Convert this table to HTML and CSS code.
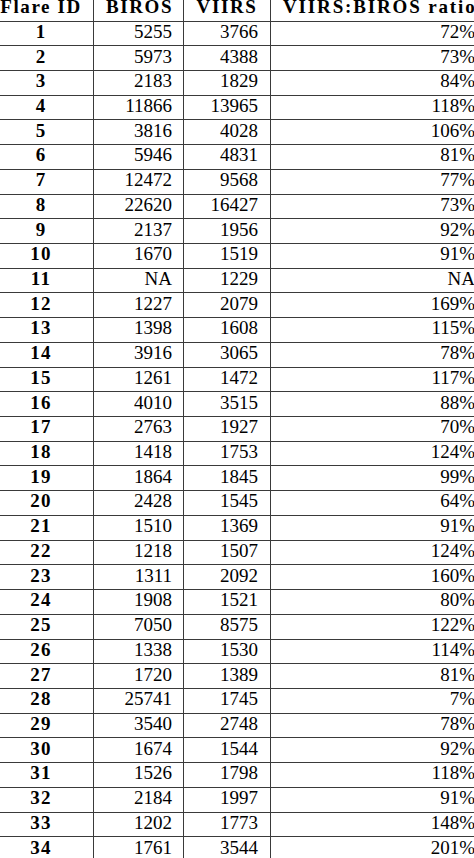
FILE: index.html
```html
<!DOCTYPE html>
<html>
<head>
<meta charset="utf-8">
<link rel="stylesheet" href="styles.css">
</head>
<body>
<div class="table" id="t">
  <div class="cell head c1">Flare ID</div>
  <div class="cell head c2">BIROS</div>
  <div class="cell head c3">VIIRS</div>
  <div class="cell head c4">VIIRS:BIROS ratio</div>
</div>
<script src="script.js"></script>
</body>
</html>
```
FILE: script.js
```js
var rows = [
[1,"5255","3766","72%"],[2,"5973","4388","73%"],[3,"2183","1829","84%"],
[4,"11866","13965","118%"],[5,"3816","4028","106%"],[6,"5946","4831","81%"],
[7,"12472","9568","77%"],[8,"22620","16427","73%"],[9,"2137","1956","92%"],
[10,"1670","1519","91%"],[11,"NA","1229","NA"],[12,"1227","2079","169%"],
[13,"1398","1608","115%"],[14,"3916","3065","78%"],[15,"1261","1472","117%"],
[16,"4010","3515","88%"],[17,"2763","1927","70%"],[18,"1418","1753","124%"],
[19,"1864","1845","99%"],[20,"2428","1545","64%"],[21,"1510","1369","91%"],
[22,"1218","1507","124%"],[23,"1311","2092","160%"],[24,"1908","1521","80%"],
[25,"7050","8575","122%"],[26,"1338","1530","114%"],[27,"1720","1389","81%"],
[28,"25741","1745","7%"],[29,"3540","2748","78%"],[30,"1674","1544","92%"],
[31,"1526","1798","118%"],[32,"2184","1997","91%"],[33,"1202","1773","148%"],
[34,"1761","3544","201%"]
];
var t = document.getElementById("t");
rows.forEach(function (r) {
  var cls = ["cell id c1", "cell num c2", "cell num c3", "cell num c4"];
  r.forEach(function (v, i) {
    var d = document.createElement("div");
    d.className = cls[i];
    d.textContent = v;
    t.appendChild(d);
  });
});
```
FILE: styles.css
```css
html, body {
  margin: 0;
  padding: 0;
  background: #fff;
  overflow: hidden;
}
.table {
  display: grid;
  grid-template-columns: 105px 90px 87px 216px;
  grid-auto-rows: 24.73px;
  margin-top: -3.2px;
  margin-left: -11px;
  width: 498px;
  font-family: "Liberation Serif", "Times New Roman", serif;
  font-size: 19px;
  line-height: 19px;
  color: #000;
}
.cell {
  box-sizing: border-box;
  border-bottom: 1px solid #3a3a3a;
  padding: 0.3px 12px 0 12px;
  white-space: nowrap;
}
.c1, .c2, .c3 {
  border-right: 1px solid #3a3a3a;
}
.c1 { padding-left: 11px; padding-right: 11px; }
.c2 { padding-right: 11px; }
.head {
  font-weight: bold;
  letter-spacing: 1.6px;
  text-align: center;
}
.head.c4 {
  text-align: left;
  letter-spacing: 1.85px;
}
.id {
  font-weight: bold;
  letter-spacing: 1.2px;
  text-align: center;
}
.num {
  text-align: right;
}
```
